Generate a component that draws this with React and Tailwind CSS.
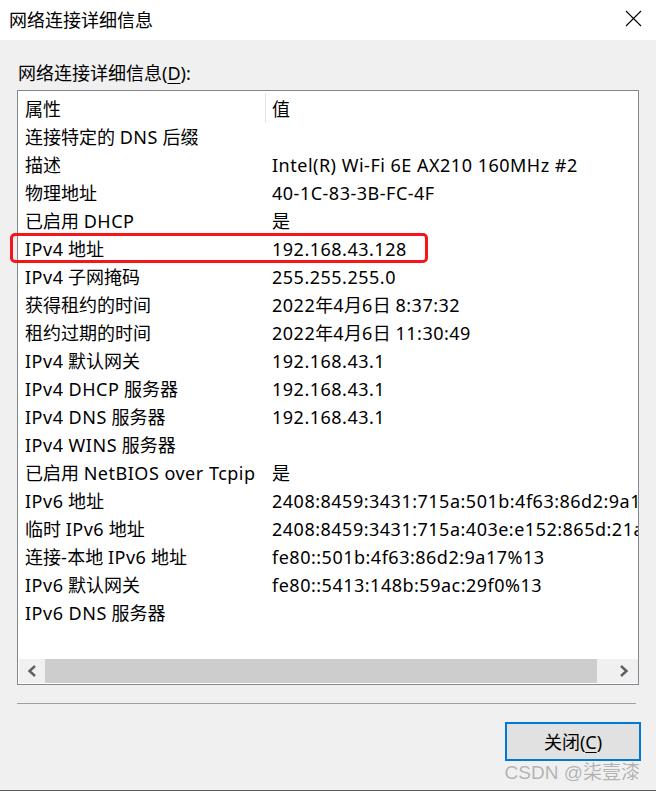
import React from "react";

const rows = [
  ["连接特定的 DNS 后缀", ""],
  ["描述", "Intel(R) Wi-Fi 6E AX210 160MHz #2"],
  ["物理地址", "40-1C-83-3B-FC-4F"],
  ["已启用 DHCP", "是"],
  ["IPv4 地址", "192.168.43.128", true],
  ["IPv4 子网掩码", "255.255.255.0"],
  ["获得租约的时间", "2022年4月6日 8:37:32"],
  ["租约过期的时间", "2022年4月6日 11:30:49"],
  ["IPv4 默认网关", "192.168.43.1"],
  ["IPv4 DHCP 服务器", "192.168.43.1"],
  ["IPv4 DNS 服务器", "192.168.43.1"],
  ["IPv4 WINS 服务器", ""],
  ["已启用 NetBIOS over Tcpip", "是"],
  ["IPv6 地址", "2408:8459:3431:715a:501b:4f63:86d2:9a17%13"],
  ["临时 IPv6 地址", "2408:8459:3431:715a:403e:e152:865d:21a6%13"],
  ["连接-本地 IPv6 地址", "fe80::501b:4f63:86d2:9a17%13"],
  ["IPv6 默认网关", "fe80::5413:148b:59ac:29f0%13"],
  ["IPv6 DNS 服务器", ""],
];

const font = { fontFamily: "'Noto Sans', 'Noto Sans CJK SC', sans-serif" };

function T({ text }) {
  const parts = text.split(/([A-Za-z0-9().:%#\-]+(?: [A-Za-z0-9().:%#\-]+)*)/);
  return (
    <>
      {parts.map((p, i) =>
        i % 2 === 1 ? (
          <span key={i} className="tracking-[0.5px]">{p}</span>
        ) : (
          <React.Fragment key={i}>{p}</React.Fragment>
        )
      )}
    </>
  );
}

export default function App() {
  return (
    <div
      className="w-[656px] h-[791px] flex flex-col bg-[#f0f0f0] text-black text-[18px] overflow-hidden"
      style={font}
    >
      {/* title bar */}
      <div className="h-[40px] bg-white flex items-center justify-between pl-[9px] pr-[14px] shrink-0">
        <span className="leading-[24px] pb-px">网络连接详细信息</span>
        <svg width="17" height="17" viewBox="0 0 17 17" className="mt-[-3px]">
          <path d="M1 1 L16 16 M16 1 L1 16" stroke="#000" strokeWidth="1.1" fill="none" />
        </svg>
      </div>

      {/* body */}
      <div className="relative flex-1 flex flex-col px-[17px]">
        <div className="mt-[21px] h-[24px] leading-[24px] pl-px">
          网络连接详细信息(<span className="underline underline-offset-[3px]">D</span>):
        </div>

        <div className="mt-[5px] w-[622px] h-[595px] border border-[#828790] bg-white flex flex-col">
          {/* header */}
          <div className="h-[31px] flex items-center shrink-0">
            <div className="w-[247px] pl-[7px] leading-[28px] pt-[5px]">属性</div>
            <div className="w-px h-[30px] bg-[#e5e5e5] self-start mt-[2px]" />
            <div className="pl-[6px] leading-[28px] pt-[5px]">值</div>
          </div>
          <div className="flex-1 flex flex-col">
            {rows.map(([k, v, hl], i) => (
              <div key={i} className="relative h-[28px] pt-[2px] flex items-center leading-[26px] whitespace-nowrap">
                <div className="w-[254px] pl-[7px] shrink-0"><T text={k} /></div>
                <div className="flex-1 overflow-hidden"><T text={v} /></div>
                {hl && (
                  <div className="absolute left-[-8px] top-[-1px] w-[418px] h-[30px] border-[3px] border-[#f5151b] rounded-[5px]" />
                )}
              </div>
            ))}
          </div>
          {/* horizontal scrollbar */}
          <div className="h-[24px] mb-px ml-px flex bg-[#f0f0f0] shrink-0">
            <div className="w-[26px] flex items-center pl-[8px]">
              <svg width="10" height="12" viewBox="0 0 10 12">
                <path d="M8 1 L2.5 6 L8 11" stroke="#606060" strokeWidth="2.4" fill="none" />
              </svg>
            </div>
            <div className="w-[552px] bg-[#cdcdcd]" />
            <div className="flex-1 flex items-center justify-end pr-[9px]">
              <svg width="10" height="12" viewBox="0 0 10 12">
                <path d="M2 1 L7.5 6 L2 11" stroke="#606060" strokeWidth="2.4" fill="none" />
              </svg>
            </div>
          </div>
        </div>

        <div className="mt-[18px] h-px w-[619px] bg-[#a0a0a0]" />

        <div className="mt-[18px] flex justify-end -mr-[2px]">
          <button className="w-[136px] h-[39px] border-2 border-[#0078d7] bg-[#e1e1e1] flex items-center justify-center leading-[24px]">
            关闭(<span className="underline underline-offset-[3px]">C</span>)
          </button>
        </div>

        <div
          className="absolute right-[16px] bottom-[6px] text-[#b2b2b2] text-[19px] leading-[22px]"
          style={{ fontFamily: "'Liberation Sans', 'Noto Sans CJK SC', sans-serif", textShadow: "0 0 1px #fff" }}
        >
          CSDN @柒壹漆
        </div>
      </div>
      <div className="h-px bg-[#5a5a5a] shrink-0" />
    </div>
  );
}
